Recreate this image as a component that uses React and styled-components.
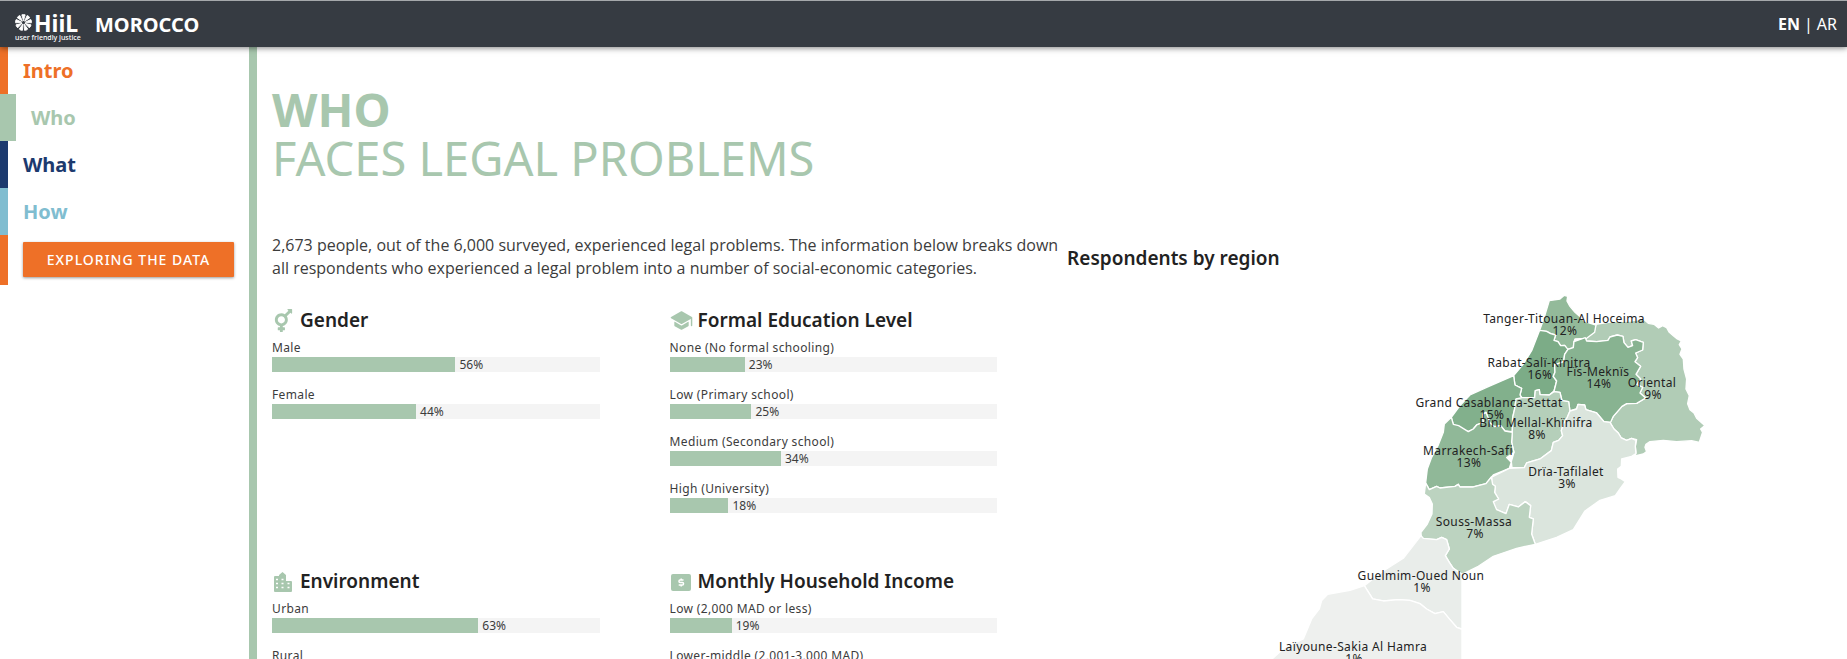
import React from 'react'
import styled, { createGlobalStyle } from 'styled-components'
import { FaTransgender } from 'react-icons/fa'
import { IoSchool } from 'react-icons/io5'

const GlobalStyle = createGlobalStyle`
  :root {
    --clr-orange: #ee7027;
    --clr-green: #a8c7ae;
    --clr-navy: #1c3a6e;
    --clr-blue: #80bdd0;
    --clr-header: #363b42;
    --clr-track: #f4f4f4;
    --clr-text: #3c3c3c;
    --clr-heading: #222222;
  }
  * {
    box-sizing: border-box;
  }
  body {
    margin: 0;
    background: #ffffff;
    color: var(--clr-text);
    font-family: 'Noto Sans', sans-serif;
  }
`

const navItems = [
  { label: 'Intro', color: 'var(--clr-orange)' },
  { label: 'Who', color: 'var(--clr-green)', active: true },
  { label: 'What', color: 'var(--clr-navy)' },
  { label: 'How', color: 'var(--clr-blue)' },
]

const CityIcon = () => (
  <svg viewBox="-2 -2 23 23" aria-hidden="true">
    <path d="M0 5a1 1 0 0 1 1-1H5V3L8.500 0L12 3V9H17a1 1 0 0 1 1 1V19a1 1 0 0 1-1 1H1a1 1 0 0 1-1-1Z" fill="currentColor" />
    <path
      d="M2 7.500H4M2 11.500H4M2 15.500H4M7.500 7.500H9.500M7.500 11.500H9.500M7.500 15.500H9.500M13.500 11.500H15.500M13.500 15.500H15.500"
      stroke="#fff"
      strokeWidth="1.500"
    />
  </svg>
)

const MoneyIcon = () => (
  <svg viewBox="-1 -2 23 23" aria-hidden="true">
    <rect x="0" y="2" width="20" height="17" rx="2" fill="currentColor" />
    <path
      d="M12.500 8H9a1 1 0 0 0-1 1v.5a1 1 0 0 0 1 1h2.500a1 1 0 0 1 1 1v.5a1 1 0 0 1-1 1H7.700M10.200 6.500v1.500M10.200 13v1.500"
      fill="none"
      stroke="#fff"
      strokeWidth="1.500"
    />
  </svg>
)

const charts = [
  {
    title: 'Gender',
    icon: <FaTransgender />,
    rows: [
      { label: 'Male', value: 56 },
      { label: 'Female', value: 44 },
    ],
  },
  {
    title: 'Formal Education Level',
    icon: <IoSchool />,
    rows: [
      { label: 'None (No formal schooling)', value: 23 },
      { label: 'Low (Primary school)', value: 25 },
      { label: 'Medium (Secondary school)', value: 34 },
      { label: 'High (University)', value: 18 },
    ],
  },
  {
    title: 'Environment',
    icon: <CityIcon />,
    rows: [{ label: 'Urban', value: 63 }, { label: 'Rural' }],
  },
  {
    title: 'Monthly Household Income',
    icon: <MoneyIcon />,
    rows: [{ label: 'Low (2,000 MAD or less)', value: 19 }, { label: 'Lower-middle (2,001-3,000 MAD)' }],
  },
]

// outlines are drawn on a grid three times finer than the labels
const regions = [
  {
    name: 'Oriental', value: 9, x: 392, y: 108, fill: '#b1ccb6',
    d: 'M1008 136L1060 128L1110 126L1150 120L1165 133L1182 136L1196 147L1208 140L1220 146L1228 160L1240 170L1252 180L1264 186L1258 197L1266 210L1260 226L1270 240L1272 270L1280 300L1278 330L1288 350L1283 374L1290 392L1302 402L1310 418L1335 440L1322 450L1328 460L1318 490L1295 485L1250 488L1210 484L1170 488L1158 496L1155 505L1160 518L1150 525L1125 531L1128 520L1126 502L1130 482L1115 478L1100 484L1084 477L1075 462L1062 450L1050 430L1060 412L1086 382L1100 374L1130 373L1157 357L1140 342L1148 325L1130 316L1142 300L1128 286L1142 262L1125 248L1133 236L1127 222L1148 213L1150 190L1127 182L1114 186L1118 200L1104 205L1092 191L1089 172L1072 168L1050 174L1044 184L1010 188L980 186L976 178L1002 160Z',
  },
  {
    name: 'Tanger-Titouan-Al Hoceima', value: 12, x: 304, y: 44, fill: '#93ba9a',
    d: 'M868 65L900 60L913 49L923 52L921 66L930 82L945 100L962 115L975 128L1008 138L1004 160L980 178L945 180L942 188L940 206L922 211L914 199L902 200L894 188L882 184L887 168L872 164L860 157L839 154L852 118Z',
  },
  {
    name: 'Rabat-Salï-Kïnitra', value: 16, x: 279, y: 88, fill: '#7cac87',
    d: 'M839 154L860 157L872 164L887 168L882 184L894 188L902 200L914 199L924 211L914 226L911 248L884 258L885 280L880 292L890 306L882 336L868 348L840 347L838 332L826 335L824 356L786 356L780 348L785 328L765 318L761 290L790 255L815 215Z',
  },
  {
    name: 'Fïs-Meknïs', value: 14, x: 338, y: 97, fill: '#88b391',
    d: 'M924 211L940 206L942 188L976 176L980 186L1010 188L1044 184L1050 174L1072 168L1089 172L1092 191L1104 205L1118 200L1114 186L1127 182L1150 190L1148 213L1127 222L1133 236L1125 248L1142 262L1128 286L1142 300L1130 316L1148 325L1140 342L1157 357L1130 373L1100 374L1086 382L1060 412L1052 430L1032 428L1010 402L978 392L974 378L954 376L950 390L930 396L926 368L906 365L900 340L882 338L890 306L880 292L885 280L884 258L911 248L914 226Z',
  },
  {
    name: 'Grand Casablanca-Settat', value: 15, x: 229, valueX: 232, y: 128, fill: '#82b08c',
    d: 'M761 290L765 318L785 328L780 348L786 358L768 362L764 390L758 415L757 458L735 456L722 440L704 443L690 432L678 400L668 406L670 430L650 438L640 450L625 458L596 446L580 436L574 415L600 380L630 348L680 325Z',
  },
  {
    name: 'Bïni Mellal-Khïnifra', value: 8, x: 276, y: 148, fill: '#b5cfba',
    d: 'M786 356L824 356L826 335L838 332L840 347L868 348L882 338L900 340L906 365L926 368L930 396L922 415L910 435L904 455L908 470L896 484L880 490L874 515L840 540L800 552L793 566L756 566L754 548L762 520L755 490L757 458L758 415L764 390L768 360Z',
  },
  {
    name: 'Marrakech-Safi', value: 13, x: 208, y: 176, fill: '#90b898',
    d: 'M574 415L580 436L596 440L625 458L640 450L650 438L670 430L668 406L678 400L690 432L704 443L722 440L735 456L757 460L755 490L762 520L740 536L754 550L748 568L700 588L678 614L640 624L600 624L595 616L585 622L540 627L530 622L508 632L497 612L502 570L515 535L534 500L550 460L553 435Z',
  },
  {
    name: 'Drïa-Tafilalet', value: 3, x: 306, y: 197, fill: '#dbe5dd',
    d: 'M930 396L950 390L954 376L974 378L978 392L1010 402L1032 428L1050 430L1062 450L1075 462L1084 477L1100 484L1115 478L1128 484L1126 502L1128 524L1115 532L1085 540L1084 562L1073 570L1074 595L1084 600L1096 608L1080 630L1066 650L1020 664L975 696L940 752L890 775L826 796L815 765L820 720L808 715L812 680L796 668L775 684L748 676L738 704L704 690L700 668L716 660L704 640L706 622L694 614L696 594L748 568L793 566L800 552L840 540L874 515L880 490L896 484L908 470L904 455L910 435L922 415Z',
  },
  {
    name: 'Souss-Massa', value: 7, x: 214, y: 247, fill: '#bcd3c0',
    d: 'M497 612L508 632L530 622L540 627L585 622L595 616L600 624L640 624L678 614L694 594L698 616L706 622L704 640L716 660L700 668L710 692L738 704L748 676L775 684L796 668L812 680L808 715L820 720L815 765L826 796L770 808L700 832L655 862L606 886L580 868L568 850L556 830L568 810L560 782L545 775L530 782L484 778L483 760L502 735L516 705L517 675L508 656L493 645Z',
  },
  {
    name: 'Guelmim-Oued Noun', value: 1, x: 161, y: 301, fill: '#e9edea',
    d: 'M483 770L490 778L530 782L545 775L560 782L568 810L556 830L568 850L580 868L606 886V1050L590 1045L570 1022L550 998L525 1004L500 990L480 974L450 964L415 962L370 966L338 960L313 920L370 876L430 838Z',
  },
  {
    name: 'Laïyoune-Sakia Al Hamra', value: 1, x: 93, y: 372, fill: '#eef0ee',
    d: 'M313 920L338 960L370 966L415 962L450 964L480 974L500 990L525 1004L550 998L570 1022L590 1045L606 1051V1200H0L20 1155L75 1105L130 1080L155 1020L178 990L185 965L203 946L270 934Z',
  },
]

const Logo = () => (
  <LogoLink href="#home" aria-label="HiiL user friendly justice">
    <LogoTop>
      <svg viewBox="-10 -10 20 20" aria-hidden="true">
        {[0, 40, 80, 120, 160, 200, 240, 280, 320].map((angle) => (
          <path key={angle} d="M0-2L-2-9Q0-10 2-9Z" fill="#fff" stroke="#fff" transform={`rotate(${angle})`} />
        ))}
      </svg>
      <strong>HiiL</strong>
    </LogoTop>
    <small>user friendly justice</small>
  </LogoLink>
)

const BarChart = ({ title, icon, rows }) => (
  <Chart>
    <h2>
      <span>{icon}</span>
      {title}
    </h2>
    {rows.map(({ label, value }) => (
      <Bar key={label}>
        <p>{label}</p>
        {value && (
          <Track>
            <Fill style={{ width: `${value}%` }} />
            {value}%
          </Track>
        )}
      </Bar>
    ))}
  </Chart>
)

const RegionMap = () => (
  <MapSvg width="460" height="390" viewBox="0 0 460 390" role="img" aria-label="Respondents by region">
    <g transform="scale(0.3333)" stroke="#fff" strokeWidth="4" strokeLinejoin="round">
      {regions.map(({ name, d, fill }) => (
        <path key={name} d={d} fill={fill} />
      ))}
    </g>
    {regions.map(({ name, value, x, valueX, y }) => (
      <text key={name} x={x} y={y}>
        {name}
        <tspan x={valueX || x + 1} dy="12">{value}%</tspan>
      </text>
    ))}
  </MapSvg>
)

const App = () => {
  return <>
    <GlobalStyle />
    <Header>
      <Logo />
      <Country>MOROCCO</Country>
      <Languages>
        <a href="#en" className="active">EN</a>
        <span>|</span>
        <a href="#ar">AR</a>
      </Languages>
    </Header>
    <Layout>
      <Sidebar>
        {navItems.map(({ label, color, active }) => (
          <NavLink key={label} href={`#${label.toLowerCase()}`} $color={color} $active={active}>
            {label}
          </NavLink>
        ))}
        <NavAction>
          <button type="button">EXPLORING THE DATA</button>
        </NavAction>
      </Sidebar>
      <Main>
        <Title>
          <strong>WHO</strong>
          FACES LEGAL PROBLEMS
        </Title>
        <Columns>
          <section>
            <Intro>
              2,673 people, out of the 6,000 surveyed, experienced legal problems. The information below breaks down
              all respondents who experienced a legal problem into a number of social-economic categories.
            </Intro>
            <Charts>
              {charts.map((chart) => (
                <BarChart key={chart.title} {...chart} />
              ))}
            </Charts>
          </section>
          <MapSection>
            <h2>Respondents by region</h2>
            <RegionMap />
          </MapSection>
        </Columns>
      </Main>
    </Layout>
  </>
}

const Header = styled.header`
  position: relative;
  z-index: 1;
  display: flex;
  align-items: center;
  height: 47px;
  padding: 0 10px 0 15px;
  background: var(--clr-header);
  border-top: 1px solid #a5a8ab;
  box-shadow: 0 1px 6px rgba(0, 0, 0, 0.5);
  color: #ffffff;
`

const LogoLink = styled.a`
  display: block;
  width: 66px;
  padding-top: 6px;
  color: #ffffff;
  text-decoration: none;
  small {
    display: block;
    font-size: 7px;
    font-weight: 500;
    line-height: 9px;
    white-space: nowrap;
  }
`

const LogoTop = styled.span`
  display: flex;
  align-items: center;
  gap: 2px;
  height: 20px;
  svg {
    width: 17px;
    height: 17px;
  }
  strong {
    font-size: 23px;
    line-height: 20px;
  }
`

const Country = styled.span`
  margin-left: 14px;
  font-size: 20px;
  font-weight: 700;
`

const Languages = styled.nav`
  display: flex;
  gap: 4px;
  margin-left: auto;
  font-size: 16px;
  a {
    color: #ffffff;
    text-decoration: none;
  }
  .active {
    font-weight: 700;
  }
`

const Layout = styled.div`
  display: grid;
  grid-template-columns: 249px 1fr;
`

const Sidebar = styled.nav`
  display: flex;
  flex-direction: column;
`

const NavLink = styled.a`
  padding-left: 15px;
  border-left: ${({ $active }) => ($active ? 16 : 8)}px solid ${({ $color }) => $color};
  color: ${({ $color }) => $color};
  font-size: 20px;
  font-weight: 700;
  line-height: 47px;
  text-decoration: none;
`

const NavAction = styled.div`
  padding: 7px 15px 8px;
  border-left: 8px solid var(--clr-orange);
  button {
    width: 100%;
    height: 35px;
    padding: 0;
    border: 0;
    border-radius: 1px;
    background: var(--clr-orange);
    box-shadow: 0 1px 3px rgba(0, 0, 0, 0.4);
    color: #ffffff;
    font-family: inherit;
    font-size: 14px;
    font-weight: 500;
    letter-spacing: 1px;
    cursor: pointer;
  }
`

const Main = styled.main`
  padding: 38px 16px 0 15px;
  border-left: 8px solid var(--clr-green);
`

const Title = styled.h1`
  margin: 0 0 51px;
  color: var(--clr-green);
  font-size: 47px;
  font-weight: 400;
  line-height: 49px;
  strong {
    display: block;
  }
`

const Columns = styled.div`
  display: grid;
  grid-template-columns: 51fr 49fr;
`

const Intro = styled.p`
  margin: 0 0 27px;
  font-family: 'Open Sans', sans-serif;
  font-size: 16px;
  line-height: 23px;
`

const Charts = styled.div`
  display: grid;
  grid-template-columns: 1fr 1fr;
  row-gap: 42px;
`

const Chart = styled.section`
  padding-right: 70px;
  h2 {
    display: flex;
    align-items: center;
    gap: 5px;
    margin: 0 0 5px;
    color: var(--clr-heading);
    font-size: 19px;
    font-weight: 600;
    line-height: 26px;
  }
  h2 span {
    display: flex;
    width: 23px;
    justify-content: center;
    color: var(--clr-green);
  }
  h2 svg {
    width: 23px;
    height: 23px;
  }
`

const Bar = styled.div`
  height: 47px;
  p {
    margin: 0;
    font-size: 12px;
    line-height: 19px;
    letter-spacing: 0.03em;
  }
`

const Track = styled.div`
  display: flex;
  align-items: center;
  gap: 4px;
  height: 15px;
  background: var(--clr-track);
  font-size: 12px;
`

const Fill = styled.div`
  height: 15px;
  background: var(--clr-green);
`

const MapSection = styled.section`
  h2 {
    margin: 11px 0 8px;
    color: var(--clr-heading);
    font-size: 19px;
    font-weight: 600;
    line-height: 26px;
  }
`

const MapSvg = styled.svg`
  display: block;
  margin: 0 111px 0 auto;
  text {
    fill: #222222;
    font-size: 12px;
    letter-spacing: 0.03em;
    text-anchor: middle;
  }
`

export default App
